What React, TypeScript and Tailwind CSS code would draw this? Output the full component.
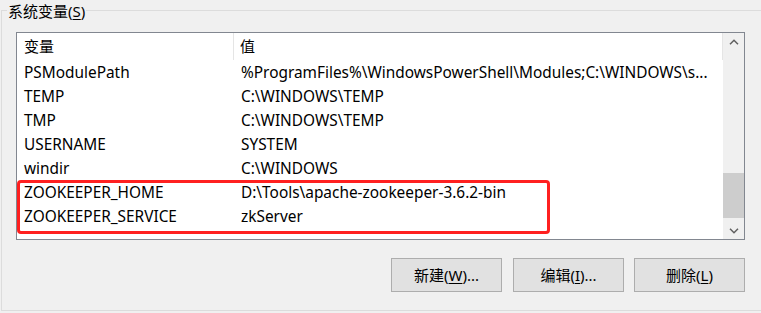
import React from "react";

type EnvVar = { name: string; value: string };

const vars: EnvVar[] = [
  { name: "PSModulePath", value: "%ProgramFiles%\\WindowsPowerShell\\Modules;C:\\WINDOWS\\s..." },
  { name: "TEMP", value: "C:\\WINDOWS\\TEMP" },
  { name: "TMP", value: "C:\\WINDOWS\\TEMP" },
  { name: "USERNAME", value: "SYSTEM" },
  { name: "windir", value: "C:\\WINDOWS" },
  { name: "ZOOKEEPER_HOME", value: "D:\\Tools\\apache-zookeeper-3.6.2-bin" },
  { name: "ZOOKEEPER_SERVICE", value: "zkServer" },
];

const font = { fontFamily: '"Segoe UI", "Noto Sans", "Noto Sans CJK SC", sans-serif' };

function Chevron({ down }: { down?: boolean }) {
  return (
    <svg width="10" height="6" viewBox="0 0 10 6" className={down ? "rotate-180" : ""}>
      <path d="M1 5.2 L5 1.2 L9 5.2" fill="none" stroke="#606060" strokeWidth="1.5" />
    </svg>
  );
}

function WinButton({ label, hotkey, tail, className }: { label: string; hotkey: string; tail: string; className?: string }) {
  return (
    <button
      className={`flex h-[34px] w-[111px] items-center justify-center border border-[#adadad] bg-[#e1e1e1] text-[15px] text-black ${className ?? ""}`}
    >
      {label}(<span className="underline underline-offset-2">{hotkey}</span>){tail}
    </button>
  );
}

export default function App() {
  return (
    <div className="h-[313px] w-[761px] overflow-hidden bg-[#f0f0f0] text-black" style={font}>
      <div className="relative pt-[10px] pl-[1px]">
        <span className="absolute left-[7px] top-[0px] bg-[#f0f0f0] px-[1px] text-[15px] leading-[22px]">
          系统变量(<span className="underline underline-offset-2">S</span>)
        </span>
        <div className="h-[301px] w-[780px] border border-[#dcdcdc]">
          <div className="ml-[14px] mt-[21px] w-[729px]">
            <div className="flex h-[208px] border border-[#828790] bg-white">
              <div className="relative flex-1">
                <div className="flex h-[27px] text-[15px]">
                  <div className="flex w-[217px] items-center border-r border-[#e5e5e5] pl-[7px]">变量</div>
                  <div className="flex flex-1 items-center border-r border-[#e5e5e5] pl-[6px]">值</div>
                </div>
                {vars.map((v) => (
                  <div key={v.name} className="flex h-[24px] items-center pt-[2px] text-[15.4px] whitespace-nowrap">
                    <div className="w-[218px] pl-[7px]">{v.name}</div>
                    <div className="flex-1 pl-[6px]">{v.value}</div>
                  </div>
                ))}
                <div className="absolute left-0 top-[147px] h-[54px] w-[533px] rounded-[4px] border-[3px] border-[#ff2020]" />
              </div>
              <div className="flex w-[21px] flex-col bg-[#f0f0f0]">
                <div className="flex h-[17px] items-center justify-center">
                  <Chevron />
                </div>
                <div className="flex flex-1 flex-col justify-end pb-[4px]">
                  <div className="h-[45px] bg-[#cdcdcd]" />
                </div>
                <div className="flex h-[17px] items-center justify-center">
                  <Chevron down />
                </div>
              </div>
            </div>
            <div className="mt-[18px] flex justify-end">
              <WinButton label="新建" hotkey="W" tail="..." />
              <WinButton label="编辑" hotkey="I" tail="..." className="ml-[11px]" />
              <WinButton label="删除" hotkey="L" tail="" className="ml-[10px]" />
            </div>
          </div>
        </div>
      </div>
    </div>
  );
}
